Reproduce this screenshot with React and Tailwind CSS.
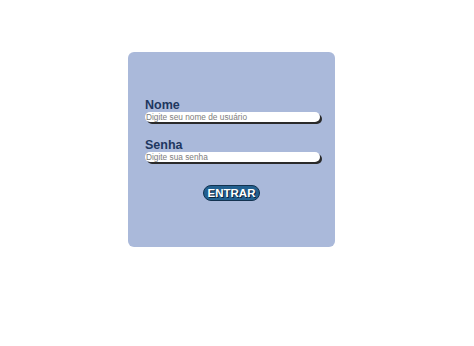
export default function App() {
  return (
    <div className="min-h-[346px] w-[474px] bg-white" style={{ fontFamily: '"Liberation Sans", Arial, sans-serif' }}>
      <div className="pt-[52px] pl-[128px]">
        <div className="flex h-[195px] w-[207px] flex-col rounded-[6px] bg-[#aab9da] pl-[17px] pr-[15px] pt-[47px]">
          <label className="block text-[12.5px] font-bold leading-[13px] text-[#1e3760]">Nome</label>
          <input
            type="text"
            placeholder="Digite seu nome de usuário"
            className="h-[10px] w-[175px] rounded-full bg-white px-[1px] text-[8.3px] leading-[10px] text-gray-700 shadow-[2px_2px_0_#2a2a2a] outline-none placeholder:text-[#7d7d7d]"
          />
          <label className="mt-[17px] block text-[12.5px] font-bold leading-[13px] text-[#1e3760]">Senha</label>
          <input
            type="password"
            placeholder="Digite sua senha"
            className="h-[10px] w-[175px] rounded-full bg-white px-[1px] text-[8.3px] leading-[10px] text-gray-700 shadow-[2px_2px_0_#2a2a2a] outline-none placeholder:text-[#7d7d7d]"
          />
          <div className="mt-[23px] flex justify-center pr-[2px]">
            <button className="h-[16px] w-[57px] rounded-full border border-[#13324f] bg-[#22608f] text-[11.5px] font-bold leading-[14px] text-white [text-shadow:1px_1px_0_#0b2238]">
              ENTRAR
            </button>
          </div>
        </div>
      </div>
    </div>
  )
}
